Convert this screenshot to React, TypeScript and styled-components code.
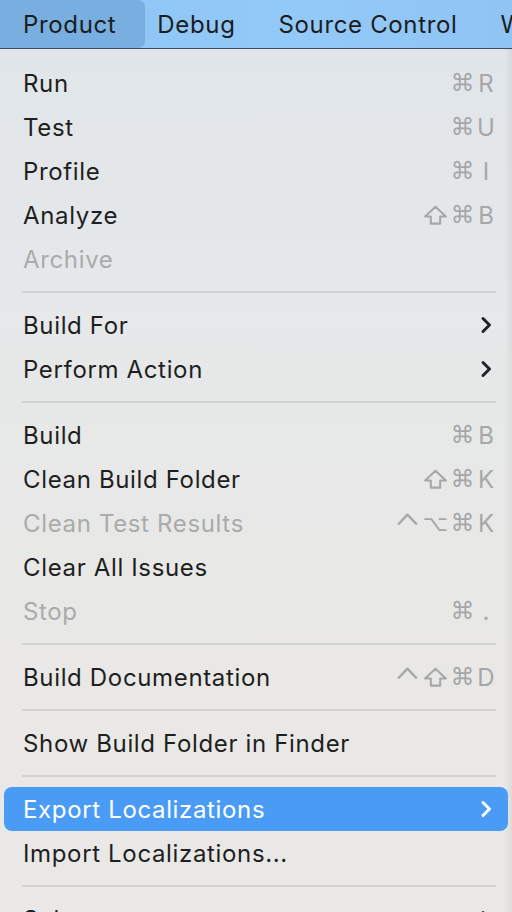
import React from "react";
import styled, { createGlobalStyle } from "styled-components";

const Global = createGlobalStyle`
  html, body { margin: 0; padding: 0; }
  body {
    width: 512px;
    height: 912px;
    overflow: hidden;
    background: #e8e8e7;
    font-family: Inter, "Noto Sans", "DejaVu Sans", sans-serif;
    -webkit-font-smoothing: antialiased;
  }
`;

const Page = styled.div`
  width: 512px;
  height: 912px;
  overflow: hidden;
  display: flex;
  flex-direction: column;
`;

const MenuBar = styled.div`
  height: 48px;
  flex: none;
  display: flex;
  align-items: stretch;
  background: linear-gradient(90deg, #8fc5f6 0%, #93c9f8 60%, #8fc4f4 100%);
  border-bottom: 1px solid #3c4c5c;
  white-space: nowrap;
  overflow: hidden;
`;

const BarItem = styled.div<{ $active?: boolean }>`
  display: flex;
  align-items: center;
  flex: none;
  padding: 0 ${(p) => (p.$active ? "29px" : "31px")} 0 ${(p) => (p.$active ? "23px" : "12px")};
  font-size: 24px;
  color: #1b1d20;
  background: ${(p) => (p.$active ? "#79aee0" : "transparent")};
  border-radius: ${(p) => (p.$active ? "0 7px 7px 0" : "0")};
  letter-spacing: 0.65px;
`;

const Menu = styled.div`
  flex: 1;
  position: relative;
  padding-top: 12px;
  background: linear-gradient(180deg, #e1e6ea 0%, #e6e8e9 30%, #e9e8e6 70%, #e9e8e6 100%);
  box-shadow: inset -6px 0 10px -6px rgba(0, 0, 0, 0.12);
`;

const Row = styled.div<{ $selected?: boolean; $disabled?: boolean }>`
  height: 44px;
  margin: 0 4px;
  padding: 0 12px 0 19px;
  display: flex;
  align-items: center;
  border-radius: 8px;
  font-size: 24px;
  letter-spacing: 0.65px;
  color: ${(p) => (p.$selected ? "#ffffff" : p.$disabled ? "#aaabab" : "#1e1f21")};
  background: ${(p) => (p.$selected ? "#4a9bf6" : "transparent")};
  white-space: nowrap;
`;

const Label = styled.span`
  flex: 1;
`;

const Shortcut = styled.span`
  display: flex;
  align-items: center;
  height: 100%;
  color: #a6a7a8;
`;

const Mod = styled.span<{ $small?: boolean }>`
  width: 27px;
  height: 100%;
  display: flex;
  align-items: center;
  justify-content: center;
  font-family: "DejaVu Sans", sans-serif;
  font-size: ${(p) => (p.$small ? "22px" : "24px")};
  letter-spacing: 0;
`;

const Key = styled.span`
  width: 20px;
  text-align: center;
  font-size: 24px;
  letter-spacing: 0;
`;

const Glyph = styled.svg`
  width: 25px;
  height: 25px;
  display: block;
`;

const Separator = styled.div`
  height: 22px;
  display: flex;
  align-items: center;
  padding: 0 16px 0 22px;
  &::after {
    content: "";
    flex: 1;
    height: 2px;
    background: #d2d2d2;
  }
`;

const Chevron = styled.svg`
  width: 20px;
  height: 20px;
`;

type Item =
  | { sep: true }
  | {
      sep?: false;
      label: string;
      mods?: string[];
      keyChar?: string;
      disabled?: boolean;
      submenu?: boolean;
      selected?: boolean;
    };

const items: Item[] = [
  { label: "Run", mods: ["⌘"], keyChar: "R" },
  { label: "Test", mods: ["⌘"], keyChar: "U" },
  { label: "Profile", mods: ["⌘"], keyChar: "I" },
  { label: "Analyze", mods: ["⇧", "⌘"], keyChar: "B" },
  { label: "Archive", disabled: true },
  { sep: true },
  { label: "Build For", submenu: true },
  { label: "Perform Action", submenu: true },
  { sep: true },
  { label: "Build", mods: ["⌘"], keyChar: "B" },
  { label: "Clean Build Folder", mods: ["⇧", "⌘"], keyChar: "K" },
  { label: "Clean Test Results", mods: ["⌃", "⌥", "⌘"], keyChar: "K", disabled: true },
  { label: "Clear All Issues" },
  { label: "Stop", mods: ["⌘"], keyChar: ".", disabled: true },
  { sep: true },
  { label: "Build Documentation", mods: ["⌃", "⇧", "⌘"], keyChar: "D" },
  { sep: true },
  { label: "Show Build Folder in Finder" },
  { sep: true },
  { label: "Export Localizations", submenu: true, selected: true },
  { label: "Import Localizations..." },
  { sep: true },
  { label: "Scheme", submenu: true },
];

const ModSymbol: React.FC<{ m: string }> = ({ m }) => {
  if (m === "⇧") {
    return (
      <Glyph viewBox="0 0 24 24" aria-label="⇧">
        <path
          d="M12 3.5 L22 13 L16.5 13 L16.5 19.8 L7.5 19.8 L7.5 13 L2 13 Z"
          fill="none"
          stroke="currentColor"
          strokeWidth="2"
          strokeLinejoin="round"
        />
      </Glyph>
    );
  }
  if (m === "⌃") {
    return (
      <Glyph viewBox="0 0 24 24" aria-label="⌃">
        <polyline
          points="2,13 11,3.5 20,13"
          fill="none"
          stroke="currentColor"
          strokeWidth="2.3"
          strokeLinejoin="round"
        />
      </Glyph>
    );
  }
  return <>{m}</>;
};

const ChevronIcon: React.FC<{ color: string }> = ({ color }) => (
  <Chevron viewBox="0 0 20 20">
    <polyline
      points="7,3.5 13.5,10 7,16.5"
      fill="none"
      stroke={color}
      strokeWidth="3"
      strokeLinecap="round"
      strokeLinejoin="round"
    />
  </Chevron>
);

export default function App() {
  return (
    <Page>
      <Global />
      <MenuBar>
        <BarItem $active>Product</BarItem>
        <BarItem>Debug</BarItem>
        <BarItem>Source Control</BarItem>
        <BarItem>Window</BarItem>
      </MenuBar>
      <Menu>
        {items.map((it, i) =>
          it.sep ? (
            <Separator key={i} />
          ) : (
            <Row key={i} $selected={it.selected} $disabled={it.disabled}>
              <Label>{it.label}</Label>
              {it.keyChar && (
                <Shortcut>
                  {it.mods?.map((m, j) => (
                    <Mod key={j} $small={m === "⌥"}>
                      <ModSymbol m={m} />
                    </Mod>
                  ))}
                  <Key>{it.keyChar}</Key>
                </Shortcut>
              )}
              {it.submenu && (
                <ChevronIcon color={it.selected ? "#ffffff" : "#222326"} />
              )}
            </Row>
          )
        )}
      </Menu>
    </Page>
  );
}
